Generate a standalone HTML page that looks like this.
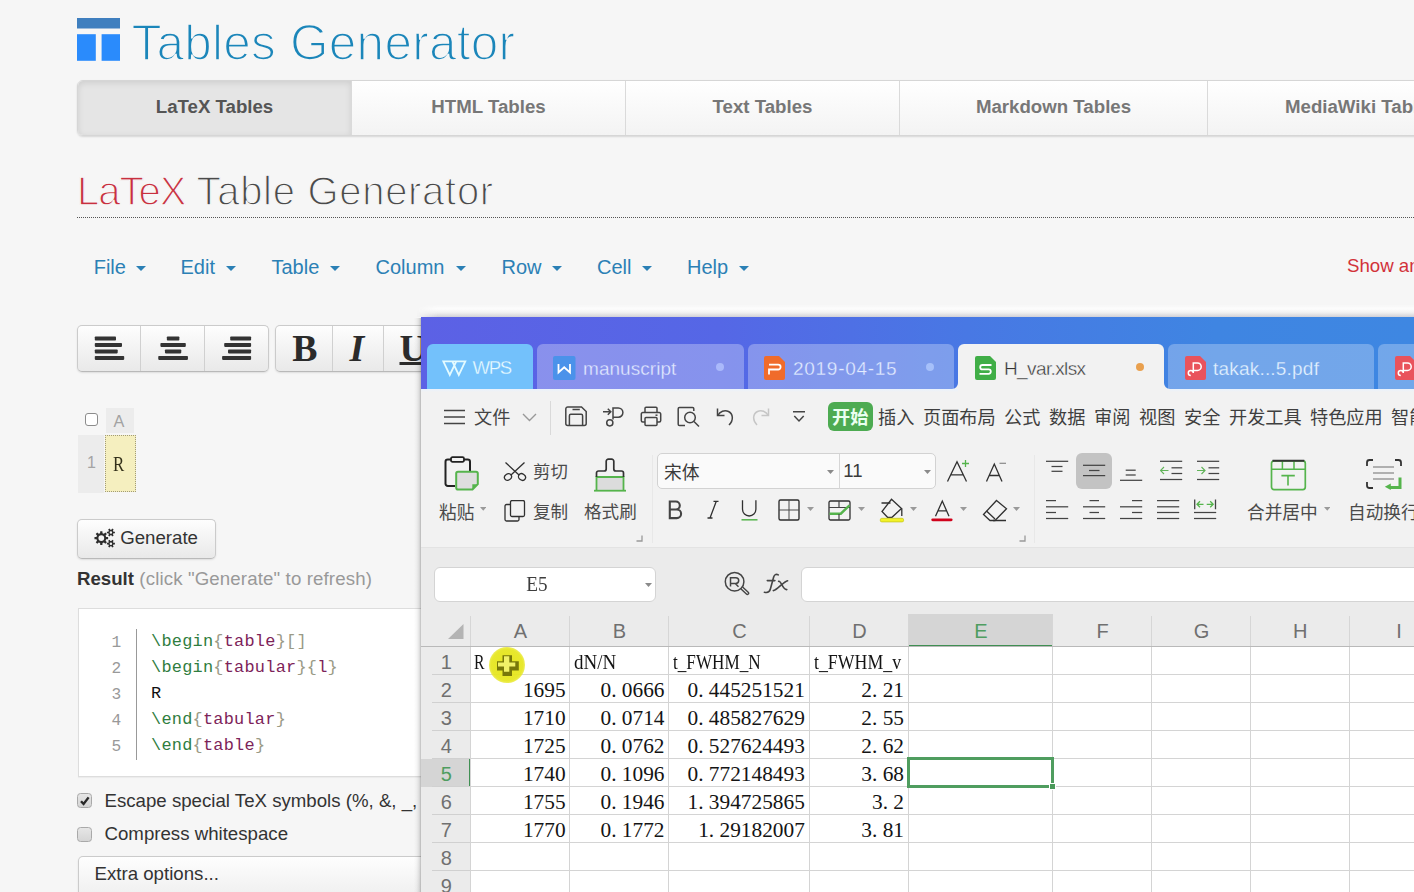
<!DOCTYPE html>
<html lang="en"><head><meta charset="utf-8"><title>LaTeX Tables Generator</title>
<style>
html,body{margin:0;padding:0}
body{width:1414px;height:892px;overflow:hidden;position:relative;background:#f6f6f6;font-family:"Liberation Sans",sans-serif;color:#333}
.a,.t,.cj,.btn,.cb,.caret,.nav,#page>div,#wpsin>div{position:absolute}
.t{white-space:nowrap;line-height:1;margin:0;font-weight:normal}
h1.t{font-weight:normal;-webkit-text-stroke:1.3px #f6f6f6}
.title{-webkit-text-stroke:1.7px #f6f6f6}
.cj{overflow:visible}
.cj text{font-family:"Liberation Sans","Noto Sans CJK SC",sans-serif;font-size:1000px}
#page{position:absolute;left:0;top:0;width:1414px;height:892px;overflow:hidden}
.nav{left:77px;top:80px;width:1400px;height:56px;box-sizing:border-box;border:1px solid #d6d6d6;border-radius:6px 0 0 6px;background:linear-gradient(#fff,#f3f3f3);box-shadow:0 1px 2px rgba(0,0,0,.13)}
.tab{position:absolute;top:0;height:54px;line-height:52.5px;text-align:center;font-weight:bold;font-size:18.67px;color:#777;border-right:1px solid #dadada;box-sizing:border-box;white-space:nowrap}
.tab.on{color:#555;background:#e5e5e5;box-shadow:inset 0 2px 6px rgba(0,0,0,.1);border-radius:5px 0 0 5px}
.caret{width:0;height:0;border-left:5.3px solid transparent;border-right:5.3px solid transparent;border-top:5.4px solid #2b80b5}
.btn{box-sizing:border-box;border:1px solid #cbcbcb;border-bottom-color:#b9b9b9;border-radius:5px;background:linear-gradient(#fefefe,#f4f4f4 45%,#e9e9e9);box-shadow:0 1px 2px rgba(0,0,0,.1)}
.grp i{position:absolute;top:0;bottom:0;width:0;border-left:1px solid #d0d0d0}
.cb{box-sizing:border-box;border:1px solid #a9a9a9;border-radius:3.5px;background:linear-gradient(#e6e6e6,#d5d5d5)}
.cb svg{position:absolute;left:0;top:-0.5px}
.code .g{color:#2f7d40}.code .k{color:#9a9a86}.code .p{color:#7d2359}
#wps{position:absolute;left:421px;top:317px;width:993px;height:575px;overflow:hidden}
#shl{position:absolute;left:413.5px;top:318px;width:7.5px;height:574px;background:linear-gradient(90deg,rgba(0,0,0,0) 0,rgba(0,0,0,.035) 40%,rgba(0,0,0,.11) 75%,rgba(0,0,0,.26) 100%)}
#sht{position:absolute;left:416px;top:304px;width:998px;height:13px;background:linear-gradient(180deg,rgba(255,255,255,0) 0,rgba(255,255,255,.75) 38%,rgba(238,238,238,.85) 68%,rgba(205,205,212,.95) 100%);-webkit-mask-image:linear-gradient(90deg,transparent 0,#000 22px);mask-image:linear-gradient(90deg,transparent 0,#000 22px)}
#wpsin{position:absolute;left:-421px;top:-317px;width:1414px;height:892px}
.hd,.nm{font-family:"Liberation Serif",serif;font-size:21.33px;color:#141414}
.hd{transform-origin:0 50%}
.dot{display:inline-block;width:.5em}
.fx i{font-family:"Liberation Serif",serif;font-size:27px}
</style></head>
<body>
<div id="page">
<svg class="a" style="left:77px;top:18px" width="43" height="43" viewBox="0 0 43 43"><title>Tables Generator logo</title><rect x="0" y="0" width="43" height="10.5" fill="#3f7fbf"/><rect x="0" y="16.2" width="18.8" height="26.6" fill="#2a8bfc"/><rect x="24.6" y="16.2" width="18.4" height="26.6" fill="#2a8bfc"/></svg>
<div class="t title" style="top:18.1px;font-size:49.5px;color:#1b86ba;left:131.5px;letter-spacing:0.25px;">Tables Generator</div>
<div class="nav"><div class="tab on" style="left:0;width:274px">LaTeX Tables</div><div class="tab" style="left:274px;width:274px">HTML Tables</div><div class="tab" style="left:548px;width:274px">Text Tables</div><div class="tab" style="left:822px;width:308px">Markdown Tables</div><div class="tab" style="left:1130px;width:300px;text-align:left;padding-left:77px">MediaWiki Tables</div></div>
<h1 class="t h1" style="top:170.64px;font-size:40px;color:#4a4a4a;left:77px;letter-spacing:0.7px;"><span style="color:#c8303f;letter-spacing:-1px">LaTeX</span> Table Generator</h1>
<div class="a" style="left:77px;top:216.5px;width:1337px;border-top:1px dotted #555"></div>
<div class="t m" style="top:256.87px;font-size:20px;color:#2b80b5;left:93.7px;">File</div>
<div class="caret" style="left:136px;top:265.5px"></div>
<div class="t m" style="top:256.87px;font-size:20px;color:#2b80b5;left:180.5px;">Edit</div>
<div class="caret" style="left:226px;top:265.5px"></div>
<div class="t m" style="top:256.87px;font-size:20px;color:#2b80b5;left:271.5px;">Table</div>
<div class="caret" style="left:330px;top:265.5px"></div>
<div class="t m" style="top:256.87px;font-size:20px;color:#2b80b5;left:375.5px;">Column</div>
<div class="caret" style="left:456px;top:265.5px"></div>
<div class="t m" style="top:256.87px;font-size:20px;color:#2b80b5;left:501.5px;">Row</div>
<div class="caret" style="left:552px;top:265.5px"></div>
<div class="t m" style="top:256.87px;font-size:20px;color:#2b80b5;left:597px;">Cell</div>
<div class="caret" style="left:641.5px;top:265.5px"></div>
<div class="t m" style="top:256.87px;font-size:20px;color:#2b80b5;left:687px;">Help</div>
<div class="caret" style="left:739px;top:265.5px"></div>
<div class="t" style="top:257.4px;font-size:18.67px;color:#d2323a;left:1347px;">Show&nbsp;an&nbsp;example</div>
<div class="btn grp" style="left:77px;top:325px;width:192px;height:46.5px"><i style="left:62px"></i><i style="left:126px"></i></div>
<div class="btn grp" style="left:275px;top:325px;width:200px;height:46.5px"><i style="left:56px"></i><i style="left:107px"></i></div>
<svg class="a" style="left:0;top:0" width="300" height="400" viewBox="0 0 300 400" fill="#333"><title>align left, center, right</title><rect x="94.8" y="336.5" width="21.2" height="4" rx="0.8"/><rect x="94.8" y="342.9" width="27.2" height="4" rx="0.8"/><rect x="94.8" y="349.4" width="22.9" height="4" rx="0.8"/><rect x="94.8" y="355.9" width="29.4" height="4" rx="0.8"/><rect x="166.85" y="336.5" width="12.5" height="4" rx="0.8"/><rect x="160.4" y="342.9" width="25.4" height="4" rx="0.8"/><rect x="164.95" y="349.4" width="16.3" height="4" rx="0.8"/><rect x="158.25" y="355.9" width="29.7" height="4" rx="0.8"/><rect x="230.2" y="336.5" width="20.9" height="4" rx="0.8"/><rect x="224.2" y="342.9" width="26.9" height="4" rx="0.8"/><rect x="228" y="349.4" width="23.1" height="4" rx="0.8"/><rect x="222.1" y="355.9" width="29" height="4" rx="0.8"/></svg>
<div class="t" style="top:329.94px;font-size:37.8px;color:#2b2b2b;left:292.2px;font-family:'Liberation Serif',serif;font-weight:bold;">B</div>
<div class="t" style="top:329.94px;font-size:37.8px;color:#2b2b2b;left:349.5px;font-family:'Liberation Serif',serif;font-weight:bold;font-style:italic;">I</div>
<div class="t" style="top:329.94px;font-size:37.8px;color:#2b2b2b;left:399.5px;font-family:'Liberation Serif',serif;font-weight:bold;text-decoration:underline;text-decoration-thickness:3px;text-underline-offset:1px;">U</div>
<div class="a" style="left:106.3px;top:407.7px;width:28px;height:25.5px;background:#ececec"></div>
<div class="a" style="left:85px;top:413px;width:13px;height:13px;border:1.5px solid #8c8c8c;border-radius:3px;background:#fff;box-sizing:border-box"></div>
<div class="t" style="top:413.2px;font-size:16.3px;color:#a2a2a2;left:-181px;width:600px;text-align:center;">A</div>
<div class="a" style="left:78.3px;top:435px;width:25.7px;height:58px;background:#ececec"></div>
<div class="t" style="top:455.46px;font-size:16px;color:#a4a4a4;left:-208.5px;width:600px;text-align:center;">1</div>
<div class="a" style="left:104.6px;top:434.6px;width:31.6px;height:57.6px;background:#f5efbf;border:1px dotted #a19b78;box-sizing:border-box"></div>
<div class="t" style="top:453.91px;font-size:21.6px;color:#33301a;left:112.5px;font-family:'Liberation Serif',serif;transform:scaleX(.78);transform-origin:0 0;">R</div>
<div class="btn" style="left:77px;top:519px;width:138.5px;height:39.5px;"></div>
<svg class="a" style="left:0;top:0" width="130" height="560" viewBox="0 0 130 560"><title>gears</title><path fill="#2d2d2d" fill-rule="evenodd" d="M106.15 536.89L108.12 537.02L108.12 539.18L106.15 539.31L105.59 540.67L106.88 542.16L105.36 543.68L103.87 542.39L102.51 542.95L102.38 544.92L100.22 544.92L100.09 542.95L98.73 542.39L97.24 543.68L95.72 542.16L97.01 540.67L96.45 539.31L94.48 539.18L94.48 537.02L96.45 536.89L97.01 535.53L95.72 534.04L97.24 532.52L98.73 533.81L100.09 533.25L100.22 531.28L102.38 531.28L102.51 533.25L103.87 533.81L105.36 532.52L106.88 534.04L105.59 535.53zM104.2 538.1a2.9 2.9 0 1 0 -5.8 0a2.9 2.9 0 1 0 5.8 0zM113.46 531.63L114.91 531.65L114.91 533.35L113.46 533.37L112.93 534.28L113.64 535.55L112.17 536.4L111.43 535.15L110.37 535.15L109.63 536.4L108.16 535.55L108.87 534.28L108.34 533.37L106.89 533.35L106.89 531.65L108.34 531.63L108.87 530.72L108.16 529.45L109.63 528.6L110.37 529.85L111.43 529.85L112.17 528.6L113.64 529.45L112.93 530.72zM112.15 532.5a1.25 1.25 0 1 0 -2.5 0a1.25 1.25 0 1 0 2.5 0zM113.46 542.83L114.91 542.85L114.91 544.55L113.46 544.57L112.93 545.48L113.64 546.75L112.17 547.6L111.43 546.35L110.37 546.35L109.63 547.6L108.16 546.75L108.87 545.48L108.34 544.57L106.89 544.55L106.89 542.85L108.34 542.83L108.87 541.92L108.16 540.65L109.63 539.8L110.37 541.05L111.43 541.05L112.17 539.8L113.64 540.65L112.93 541.92zM112.15 543.7a1.25 1.25 0 1 0 -2.5 0a1.25 1.25 0 1 0 2.5 0z"/></svg>
<div class="t" style="top:528.9px;font-size:18.67px;color:#333;left:120.2px;">Generate</div>
<div class="t" style="top:569.7px;font-size:18.67px;color:#999;left:77px;letter-spacing:0.13px;"><b style="color:#333;letter-spacing:0">Result</b> (click "Generate" to refresh)</div>
<div class="a" style="left:77.5px;top:608px;width:1200px;height:168.5px;background:#fff;border:1px solid #ddd;box-sizing:border-box;box-shadow:0 1px 1px rgba(0,0,0,.04)"></div>
<div class="a" style="left:135.5px;top:629.3px;width:0px;height:130.6px;border-left:1px solid #999"></div>
<div class="t" style="top:635.08px;font-size:16.2px;color:#999;left:111.5px;font-family:'Liberation Mono',monospace;">1</div>
<div class="t code" style="top:634.04px;font-size:16.91px;color:#111;left:151px;font-family:'Liberation Mono',monospace;letter-spacing:0.24px;"><span class="g">\begin</span><span class="k">{</span><span class="p">table</span><span class="k">}[]</span></div>
<div class="t" style="top:661.08px;font-size:16.2px;color:#999;left:111.5px;font-family:'Liberation Mono',monospace;">2</div>
<div class="t code" style="top:660.04px;font-size:16.91px;color:#111;left:151px;font-family:'Liberation Mono',monospace;letter-spacing:0.24px;"><span class="g">\begin</span><span class="k">{</span><span class="p">tabular</span><span class="k">}{</span><span class="p">l</span><span class="k">}</span></div>
<div class="t" style="top:687.08px;font-size:16.2px;color:#999;left:111.5px;font-family:'Liberation Mono',monospace;">3</div>
<div class="t code" style="top:686.04px;font-size:16.91px;color:#111;left:151px;font-family:'Liberation Mono',monospace;letter-spacing:0.24px;">R</div>
<div class="t" style="top:713.08px;font-size:16.2px;color:#999;left:111.5px;font-family:'Liberation Mono',monospace;">4</div>
<div class="t code" style="top:712.04px;font-size:16.91px;color:#111;left:151px;font-family:'Liberation Mono',monospace;letter-spacing:0.24px;"><span class="g">\end</span><span class="k">{</span><span class="p">tabular</span><span class="k">}</span></div>
<div class="t" style="top:739.08px;font-size:16.2px;color:#999;left:111.5px;font-family:'Liberation Mono',monospace;">5</div>
<div class="t code" style="top:738.04px;font-size:16.91px;color:#111;left:151px;font-family:'Liberation Mono',monospace;letter-spacing:0.24px;"><span class="g">\end</span><span class="k">{</span><span class="p">table</span><span class="k">}</span></div>
<div class="cb" style="left:77px;top:793px;width:15px;height:15px;"><svg width="14" height="14" viewBox="0 0 14 14"><path d="M3 7.2l2.6 2.8 5-6.6" fill="none" stroke="#2a2a2a" stroke-width="2.4"/></svg></div>
<div class="t" style="top:791.9px;font-size:18.67px;color:#333;left:104.5px;">Escape special TeX symbols (%, &amp;, _, #, $)</div>
<div class="cb" style="left:77px;top:827px;width:15px;height:15px;"></div>
<div class="t" style="top:824.5px;font-size:18.67px;color:#333;left:104.5px;">Compress whitespace</div>
<div class="btn" style="left:77.5px;top:856px;width:1200px;height:60px;"></div>
<div class="t" style="top:864.9px;font-size:18.67px;color:#333;left:94.5px;">Extra options...</div>
</div>
<div id="shl"></div><div id="sht"></div>
<div id="wps"><div id="wpsin">
<div class="a" style="left:421px;top:317px;width:993px;height:72px;background:linear-gradient(90deg,#5c61e5 0%,#5567e6 30%,#4878e4 55%,#3f85e2 80%,#3e87e2 100%)"></div>
<div class="a" style="left:427px;top:344.3px;width:106px;height:45px;background:#73c1fb;border-radius:6px 6px 0 0"></div>
<svg class="a" style="left:441.5px;top:359.5px;" width="25" height="17" viewBox="0 0 25 17"><title>WPS logo</title><path d="M1.3 1.3H14.3L7.8 15zM10.3 1.3H23.3L16.8 15z" fill="none" stroke="#e4fbff" stroke-width="1.8" stroke-linejoin="miter"/></svg>
<div class="t" style="top:359.06px;font-size:18.6px;color:#e9fcff;left:472.5px;letter-spacing:-1.4px;-webkit-text-stroke:.3px #73c1fb;">WPS</div>
<div class="a" style="left:537px;top:344.3px;width:207px;height:45px;background:rgba(255,255,255,.29);border-radius:6px 6px 0 0"></div>
<svg class="a" style="left:553px;top:356px;" width="22.5" height="24" viewBox="0 0 22.5 24"><rect width="22.5" height="24" rx="2" fill="#4b92ea"/><path d="M5.5 8v8.5l5.7-5.2 5.8 5.2V8" fill="none" stroke="#fff" stroke-width="1.8"/></svg>
<div class="t" style="top:358.72px;font-size:19px;color:#e3eaff;left:583px;letter-spacing:0.05px;-webkit-text-stroke:.3px #8892ee;">manuscript</div>
<div class="a" style="left:715.8px;top:362.6px;width:8px;height:8px;background:#aab9fb;border-radius:50%"></div>
<div class="a" style="left:748px;top:344.3px;width:206px;height:45px;background:rgba(255,255,255,.29);border-radius:6px 6px 0 0"></div>
<svg class="a" style="left:764px;top:356px;" width="21" height="24" viewBox="0 0 21 24"><path d="M2 0h13l6 6v16a2 2 0 0 1-2 2H2a2 2 0 0 1-2-2V2a2 2 0 0 1 2-2z" fill="#f06b2b"/><path d="M5 18.5v-5h9.2a2.4 2.4 0 0 0 0-4.8H5" fill="none" stroke="#fff" stroke-width="1.8"/></svg>
<div class="t" style="top:358.72px;font-size:19px;color:#e3ecff;left:793px;letter-spacing:0.72px;-webkit-text-stroke:.3px #829aee;">2019-04-15</div>
<div class="a" style="left:925.7px;top:362.6px;width:8px;height:8px;background:#a6c0fa;border-radius:50%"></div>
<div class="a" style="left:958px;top:344.3px;width:206px;height:46px;background:#f2f2f2;border-radius:6px 6px 0 0"></div>
<svg class="a" style="left:952px;top:383px;" width="6" height="6" viewBox="0 0 6 6"><path d="M6 0v6H0A6 6 0 0 0 6 0z" fill="#f2f2f2"/></svg>
<svg class="a" style="left:1164px;top:383px;" width="6" height="6" viewBox="0 0 6 6"><path d="M0 0v6h6A6 6 0 0 1 0 0z" fill="#f2f2f2"/></svg>
<svg class="a" style="left:974.5px;top:356px;" width="21" height="24" viewBox="0 0 21 24"><path d="M2 0h13l6 6v16a2 2 0 0 1-2 2H2a2 2 0 0 1-2-2V2a2 2 0 0 1 2-2z" fill="#40ae47"/><path d="M16.5 9H7.4a2.2 2.2 0 0 0 0 4.4h6.2a2.2 2.2 0 0 1 0 4.4H4.5" fill="none" stroke="#fff" stroke-width="1.8"/></svg>
<div class="t" style="top:358.72px;font-size:19px;color:#333;left:1004px;letter-spacing:-0.62px;-webkit-text-stroke:.4px #f2f2f2;">H_var.xlsx</div>
<div class="a" style="left:1135.7px;top:362.6px;width:8px;height:8px;background:#e9a04e;border-radius:50%"></div>
<div class="a" style="left:1168px;top:344.3px;width:205.5px;height:45px;background:rgba(255,255,255,.27);border-radius:6px 6px 0 0"></div>
<svg class="a" style="left:1184.5px;top:356px;" width="21" height="24" viewBox="0 0 21 24"><path d="M2 0h13l6 6v16a2 2 0 0 1-2 2H2a2 2 0 0 1-2-2V2a2 2 0 0 1 2-2z" fill="#e9535c"/><path d="M5.8 19.6a2.5 2.5 0 1 1 2.5-2.5V7h4.2a3.7 3.7 0 0 1 0 7.4H8.3" fill="none" stroke="#fff" stroke-width="1.5"/></svg>
<div class="t" style="top:358.72px;font-size:19px;color:#e4f3ff;left:1213px;letter-spacing:0.2px;-webkit-text-stroke:.25px #73a6ec;">takak...5.pdf</div>
<div class="a" style="left:1378px;top:344.3px;width:205px;height:45px;background:rgba(255,255,255,.27);border-radius:6px 6px 0 0"></div>
<svg class="a" style="left:1394.5px;top:356px;" width="21" height="24" viewBox="0 0 21 24"><path d="M2 0h13l6 6v16a2 2 0 0 1-2 2H2a2 2 0 0 1-2-2V2a2 2 0 0 1 2-2z" fill="#e9535c"/><path d="M5.8 19.6a2.5 2.5 0 1 1 2.5-2.5V7h4.2a3.7 3.7 0 0 1 0 7.4H8.3" fill="none" stroke="#fff" stroke-width="1.5"/></svg>
<div class="a" style="left:421px;top:389px;width:993px;height:160px;background:#f2f2f2"></div>
<div class="a" style="left:421px;top:388.8px;width:537px;height:3px;background:linear-gradient(#e9f2fd,#f2f2f2)"></div>
<div class="a" style="left:1170px;top:388.8px;width:244px;height:3px;background:linear-gradient(#e9f2fd,#f2f2f2)"></div>
<svg class="a" style="left:444px;top:405px;" width="22" height="22" viewBox="0 0 22 22"><path d="M0 5.5h21M0 12h21M0 18.5h21" fill="none" stroke="#444" stroke-width="1.5"/></svg>
<svg class="cj" role="img" aria-label="文件" style="left:474px;top:407.5px;" width="36.4" height="18.2" viewBox="0 -880 2000 1000"><title>文件</title><text x="0" y="0" fill="#444">文件</text></svg>
<svg class="a" style="left:522px;top:413px;" width="15" height="9" viewBox="0 0 15 9"><path d="M1 1l6.5 6.5L14 1" fill="none" stroke="#999" stroke-width="1.4"/></svg>
<div class="a" style="left:550px;top:401px;width:0px;height:34px;border-left:1px solid #d9d9d9"></div>
<svg class="a" style="left:565px;top:406px;" width="22" height="21" viewBox="0 0 22 21"><title>save</title><path d="M0.8 3a2 2 0 0 1 2-2h13.7l4.7 4.5V17.6a2 2 0 0 1-2 2H2.8a2 2 0 0 1-2-2z" fill="none" stroke="#444" stroke-width="1.5"/><path d="M4.4 19.5V9.7a1.4 1.4 0 0 1 1.4-1.4h10.4a1.4 1.4 0 0 1 1.4 1.4v9.8M7.5 3.5h7.3" fill="none" stroke="#444" stroke-width="1.5"/></svg>
<svg class="a" style="left:602px;top:406px;" width="23" height="22" viewBox="0 0 23 22"><title>export</title><path d="M1 5.7h7.8M5.8 2.7l3 3-3 3" fill="none" stroke="#444" stroke-width="1.5"/><path d="M11 13.5V2h5.3a4.6 4.6 0 0 1 0 9.2H11" fill="none" stroke="#444" stroke-width="1.5"/><circle cx="7.8" cy="16.8" r="3.1" fill="none" stroke="#444" stroke-width="1.5"/></svg>
<svg class="a" style="left:639.5px;top:406px;" width="22" height="21" viewBox="0 0 22 21"><title>print</title><path d="M5 6.5V2.3a1 1 0 0 1 1-1h10a1 1 0 0 1 1 1v4.2" fill="none" stroke="#444" stroke-width="1.5"/><path d="M5 16H2.8a1.5 1.5 0 0 1-1.5-1.5V8a1.5 1.5 0 0 1 1.5-1.5h16.4A1.5 1.5 0 0 1 20.7 8v6.5a1.5 1.5 0 0 1-1.5 1.5H17" fill="none" stroke="#444" stroke-width="1.5"/><rect x="5" y="11.5" width="12" height="8" rx="1" fill="none" stroke="#444" stroke-width="1.5"/><path d="M15.5 9.2h2" fill="none" stroke="#444" stroke-width="1.5"/></svg>
<svg class="a" style="left:676.5px;top:406px;" width="23" height="22" viewBox="0 0 23 22"><title>preview</title><path d="M8 19.5H2.5a1.3 1.3 0 0 1-1.3-1.3V2.8a1.3 1.3 0 0 1 1.3-1.3h13a1.3 1.3 0 0 1 1.3 1.3V5" fill="none" stroke="#444" stroke-width="1.5"/><circle cx="13" cy="11.5" r="5.3" fill="none" stroke="#444" stroke-width="1.5"/><path d="M17 15.5l5 5" fill="none" stroke="#444" stroke-width="1.5"/></svg>
<svg class="a" style="left:714.5px;top:407px;" width="20" height="19" viewBox="0 0 20 19"><title>undo</title><path d="M2.5 1.5v7h7" fill="none" stroke="#444" stroke-width="1.5"/><path d="M2.8 8.3C5 4.5 9.5 2.6 13.5 4.5c4.5 2.2 5.5 8.5 0.5 13.5" fill="none" stroke="#444" stroke-width="1.5"/></svg>
<svg class="a" style="left:750.5px;top:407px;" width="20" height="19" viewBox="0 0 20 19"><title>redo</title><g fill="none" stroke="#c6c6c6" stroke-width="1.5"><path d="M17.5 1.5v7h-7"/><path d="M17.2 8.3C15 4.5 10.5 2.6 6.5 4.5c-4.5 2.2-5.5 8.5-0.5 13.5"/></g></svg>
<svg class="a" style="left:792px;top:410px;" width="14" height="13" viewBox="0 0 14 13"><path d="M1 1.8h12M2.3 6l4.7 5 4.7-5" fill="none" stroke="#444" stroke-width="1.5"/></svg>
<div class="a" style="left:828px;top:402.3px;width:45px;height:29.2px;background:#4dab52;border-radius:6px"></div>
<svg class="cj" role="img" aria-label="开始" style="left:832.3px;top:408.3px;" width="36.4" height="18.2" viewBox="0 -880 2000 1000"><title>开始</title><text x="0" y="0" fill="#eafff0" font-weight="bold">开始</text></svg>
<svg class="cj" role="img" aria-label="插入" style="left:877.6px;top:408px;" width="36.4" height="18.2" viewBox="0 -880 2000 1000"><title>插入</title><text x="0" y="0" fill="#3f3f3f">插入</text></svg>
<svg class="cj" role="img" aria-label="页面布局" style="left:922.6px;top:408px;" width="72.8" height="18.2" viewBox="0 -880 4000 1000"><title>页面布局</title><text x="0" y="0" fill="#3f3f3f">页面布局</text></svg>
<svg class="cj" role="img" aria-label="公式" style="left:1003.6px;top:408px;" width="36.4" height="18.2" viewBox="0 -880 2000 1000"><title>公式</title><text x="0" y="0" fill="#3f3f3f">公式</text></svg>
<svg class="cj" role="img" aria-label="数据" style="left:1048.6px;top:408px;" width="36.4" height="18.2" viewBox="0 -880 2000 1000"><title>数据</title><text x="0" y="0" fill="#3f3f3f">数据</text></svg>
<svg class="cj" role="img" aria-label="审阅" style="left:1093.6px;top:408px;" width="36.4" height="18.2" viewBox="0 -880 2000 1000"><title>审阅</title><text x="0" y="0" fill="#3f3f3f">审阅</text></svg>
<svg class="cj" role="img" aria-label="视图" style="left:1138.6px;top:408px;" width="36.4" height="18.2" viewBox="0 -880 2000 1000"><title>视图</title><text x="0" y="0" fill="#3f3f3f">视图</text></svg>
<svg class="cj" role="img" aria-label="安全" style="left:1183.6px;top:408px;" width="36.4" height="18.2" viewBox="0 -880 2000 1000"><title>安全</title><text x="0" y="0" fill="#3f3f3f">安全</text></svg>
<svg class="cj" role="img" aria-label="开发工具" style="left:1228.6px;top:408px;" width="72.8" height="18.2" viewBox="0 -880 4000 1000"><title>开发工具</title><text x="0" y="0" fill="#3f3f3f">开发工具</text></svg>
<svg class="cj" role="img" aria-label="特色应用" style="left:1309.6px;top:408px;" width="72.8" height="18.2" viewBox="0 -880 4000 1000"><title>特色应用</title><text x="0" y="0" fill="#3f3f3f">特色应用</text></svg>
<svg class="cj" role="img" aria-label="智能" style="left:1390.6px;top:408px;" width="36.4" height="18.2" viewBox="0 -880 2000 1000"><title>智能</title><text x="0" y="0" fill="#3f3f3f">智能</text></svg>
<svg class="a" style="left:444px;top:456px;" width="36" height="36" viewBox="0 0 36 36"><title>paste</title><path d="M7 3.5H3.8A2.3 2.3 0 0 0 1.5 5.8V27.7A2.3 2.3 0 0 0 3.8 30H11M20 3.5h3.7A2.3 2.3 0 0 1 26 5.8V15" fill="none" stroke="#222" stroke-width="2"/><rect x="7" y="1.2" width="13" height="4.6" rx="1.5" fill="none" stroke="#222" stroke-width="1.8"/><path d="M14 15.7h18a1.8 1.8 0 0 1 1.8 1.8v10.7l-5.3 5.3H14a1.8 1.8 0 0 1-1.8-1.8V17.5a1.8 1.8 0 0 1 1.8-1.8z" fill="#dedede" stroke="#55b44c" stroke-width="2"/><path d="M33.3 28.3l-5 5v-5z" fill="#55b44c"/></svg>
<svg class="cj" role="img" aria-label="粘贴" style="left:438.6px;top:503px;" width="35.4" height="17.7" viewBox="0 -880 2000 1000"><title>粘贴</title><text x="0" y="0" fill="#4a4a4a">粘贴</text></svg>
<svg class="a" style="left:479.5px;top:506.8px;" width="6.5" height="3.8" viewBox="0 0 6.5 3.8"><path d="M0 0h6.5L3.25 3.8z" fill="#9a9a9a"/></svg>
<svg class="a" style="left:503px;top:461px;" width="24" height="21" viewBox="0 0 24 21"><title>cut</title><path d="M2.5 1.5L16.3 14.3M21.5 1.5L7.7 14.3" fill="none" stroke="#303030" stroke-width="1.3"/><ellipse cx="5" cy="16" rx="3.7" ry="3.1" transform="rotate(-35 5 16)" fill="none" stroke="#303030" stroke-width="1.3"/><ellipse cx="19" cy="16" rx="3.7" ry="3.1" transform="rotate(35 19 16)" fill="none" stroke="#303030" stroke-width="1.3"/></svg>
<svg class="cj" role="img" aria-label="剪切" style="left:533px;top:463.4px;" width="34.8" height="17.4" viewBox="0 -880 2000 1000"><title>剪切</title><text x="0" y="0" fill="#4a4a4a">剪切</text></svg>
<svg class="a" style="left:504px;top:500px;" width="22" height="23" viewBox="0 0 22 23"><title>copy</title><rect x="6.5" y="0.5" width="14" height="16" rx="1.5" fill="none" stroke="#303030" stroke-width="1.3"/><path d="M6.5 4.5H2.5A1.5 1.5 0 0 0 1 6V19.5A1.5 1.5 0 0 0 2.5 21H13.5a1.5 1.5 0 0 0 1.5-1.5V16.5" fill="none" stroke="#303030" stroke-width="1.3"/></svg>
<svg class="cj" role="img" aria-label="复制" style="left:532.6px;top:503px;" width="35.2" height="17.6" viewBox="0 -880 2000 1000"><title>复制</title><text x="0" y="0" fill="#4a4a4a">复制</text></svg>
<svg class="a" style="left:593px;top:458px;" width="34" height="34" viewBox="0 0 34 34"><title>format painter</title><path d="M3.5 32.5V19h27v13.5" fill="#dcdcdc" stroke="#55b44c" stroke-width="1.8"/><path d="M1 32.7h32" stroke="#55b44c" stroke-width="1.8"/><path d="M3.5 19v-4a2 2 0 0 1 2-2h5.7a2 2 0 0 0 2-2V3.3a2.2 2.2 0 0 1 2.2-2.2h3.2a2.2 2.2 0 0 1 2.2 2.2V11a2 2 0 0 0 2 2h5.7a2 2 0 0 1 2 2v4" fill="none" stroke="#333" stroke-width="1.7"/></svg>
<svg class="cj" role="img" aria-label="格式刷" style="left:583.5px;top:503px;" width="52.8" height="17.6" viewBox="0 -880 3000 1000"><title>格式刷</title><text x="0" y="0" fill="#4a4a4a">格式刷</text></svg>
<svg class="a" style="left:636px;top:535px;" width="7" height="7" viewBox="0 0 7 7"><path d="M6 0.5V6H0.5" fill="none" stroke="#999" stroke-width="1.3"/></svg>
<div class="a" style="left:651.5px;top:455px;width:0px;height:88px;border-left:1px solid #e8e8e8"></div>
<div class="a" style="left:657px;top:452.8px;width:278.5px;height:36.2px;background:#fafafa;border:1px solid #d2d2d2;border-radius:5px;box-sizing:border-box"></div>
<div class="a" style="left:838.5px;top:453.5px;width:0px;height:35px;border-left:1px solid #d6d6d6"></div>
<svg class="cj" role="img" aria-label="宋体" style="left:663.6px;top:462.8px;" width="35.6" height="17.8" viewBox="0 -880 2000 1000"><title>宋体</title><text x="0" y="0" fill="#3a3a3a">宋体</text></svg>
<svg class="a" style="left:827px;top:470.3px;" width="7" height="4" viewBox="0 0 7 4"><path d="M0 0h7L3.5 4z" fill="#8a8a8a"/></svg>
<div class="t" style="top:461.86px;font-size:18.6px;color:#3a3a3a;left:843.3px;">11</div>
<svg class="a" style="left:924px;top:470.3px;" width="7" height="4" viewBox="0 0 7 4"><path d="M0 0h7L3.5 4z" fill="#8a8a8a"/></svg>
<svg class="a" style="left:946px;top:459px;" width="24" height="24" viewBox="0 0 24 24"><title>increase font</title><path d="M1.5 22.5L11 2.7 20.5 22.5M4.8 15.8h12.4" fill="none" stroke="#303030" stroke-width="1.3"/><path d="M19.5 1v7M16 4.5h7" stroke="#55b44c" stroke-width="1.3" fill="none"/></svg>
<svg class="a" style="left:985px;top:461px;" width="22" height="22" viewBox="0 0 22 22"><title>decrease font</title><path d="M1.5 20.5L9.3 3 17 20.5M4.3 14.5h10" fill="none" stroke="#303030" stroke-width="1.3"/><path d="M14.5 2.3h6.5" stroke="#888" stroke-width="1.2" fill="none"/></svg>
<svg class="a" style="left:667px;top:499px;" width="17" height="21" viewBox="0 0 17 21"><title>bold</title><path d="M2.8 2.5h6a4 4 0 0 1 0 8h-6zM2.8 10.5h7a4.3 4.3 0 0 1 0 8.6h-7z" fill="none" stroke="#444" stroke-width="2.1"/></svg>
<svg class="a" style="left:706px;top:499px;" width="14" height="21" viewBox="0 0 14 21"><title>italic</title><path d="M10.3 2.3L4 19M7.5 2.3h5M1.5 19h5" fill="none" stroke="#303030" stroke-width="1.3"/></svg>
<svg class="a" style="left:740px;top:499px;" width="19" height="23" viewBox="0 0 19 23"><title>underline</title><path d="M2.5 1.3v9a6.7 6.7 0 0 0 13.4 0v-9" fill="none" stroke="#303030" stroke-width="1.3"/><path d="M1.5 20.8h16" stroke="#55b44c" stroke-width="1.5" fill="none"/></svg>
<svg class="a" style="left:777.5px;top:498.8px;" width="22" height="22" viewBox="0 0 22 22"><title>borders</title><rect x="1" y="1" width="20" height="20" rx="1.5" fill="none" stroke="#2c2c2c" stroke-width="1.35"/><path d="M11 1v20M1 11h20" stroke="#4a4a4a" stroke-width="1" fill="none"/></svg>
<svg class="a" style="left:807px;top:507.4px;" width="7" height="4" viewBox="0 0 7 4"><path d="M0 0h7L3.5 4z" fill="#9a9a9a"/></svg>
<svg class="a" style="left:827.5px;top:500px;" width="24" height="21" viewBox="0 0 24 21"><title>table style</title><rect x="1" y="1" width="21" height="19" rx="1.5" fill="none" stroke="#303030" stroke-width="1.3"/><path d="M1 7.5h21M11 1v6.5" stroke="#444" stroke-width="1.2" fill="none"/><path d="M1.5 13.7h11.3l8.7-8.4" stroke="#55b44c" stroke-width="2.4" fill="none"/><path d="M11 14v6" stroke="#444" stroke-width="1.2" fill="none"/></svg>
<svg class="a" style="left:857.5px;top:507.4px;" width="7" height="4" viewBox="0 0 7 4"><path d="M0 0h7L3.5 4z" fill="#9a9a9a"/></svg>
<svg class="a" style="left:879px;top:496.5px;" width="26" height="26" viewBox="0 0 26 26"><title>fill</title><path d="M12.5 2.3L22.5 11.5 13 20.3H8.5L3 14.5z" fill="none" stroke="#303030" stroke-width="1.3"/><path d="M2.5 6h9M22.8 11.5V19" fill="none" stroke="#303030" stroke-width="1.3"/><rect x="1.3" y="21.3" width="23.3" height="3.6" rx="1.5" fill="#f2f228" stroke="#c8c820" stroke-width="0.8"/></svg>
<svg class="a" style="left:910.3px;top:507.4px;" width="7" height="4" viewBox="0 0 7 4"><path d="M0 0h7L3.5 4z" fill="#9a9a9a"/></svg>
<svg class="a" style="left:930px;top:498.5px;" width="24" height="24" viewBox="0 0 24 24"><title>font color</title><path d="M5.5 17.3L12.3 2 19 17.3M8 11.8h8.6" fill="none" stroke="#303030" stroke-width="1.3"/><rect x="1.3" y="19.4" width="21.3" height="2.8" rx="1.4" fill="#d0021b"/></svg>
<svg class="a" style="left:960.3px;top:507.4px;" width="7" height="4" viewBox="0 0 7 4"><path d="M0 0h7L3.5 4z" fill="#9a9a9a"/></svg>
<svg class="a" style="left:982px;top:498.5px;" width="26" height="23" viewBox="0 0 26 23"><title>clear</title><path d="M14.5 1.5L24.5 9.8 13 21.5H8L1.5 15.5z" fill="none" stroke="#303030" stroke-width="1.3"/><path d="M4.5 12l8.5 8M11 21.5h13" fill="none" stroke="#303030" stroke-width="1.3"/></svg>
<svg class="a" style="left:1012.7px;top:507.4px;" width="7" height="4" viewBox="0 0 7 4"><path d="M0 0h7L3.5 4z" fill="#9a9a9a"/></svg>
<svg class="a" style="left:1018.5px;top:534.5px;" width="7" height="7" viewBox="0 0 7 7"><path d="M6 0.5V6H0.5" fill="none" stroke="#999" stroke-width="1.3"/></svg>
<div class="a" style="left:1034px;top:455px;width:0px;height:88px;border-left:1px solid #e8e8e8"></div>
<svg class="a" style="left:1046px;top:455px;" width="23" height="26" viewBox="0 0 23 26"><path d="M0 6.3H22.2" stroke="#444" stroke-width="1.25" fill="none"/><path d="M5.5 11.5H16.5" stroke="#444" stroke-width="1.25" fill="none"/><path d="M5.5 16.3H16.5" stroke="#444" stroke-width="1.25" fill="none"/></svg>
<div class="a" style="left:1076px;top:452.8px;width:36px;height:36.2px;background:#c3c3c3;border-radius:6px"></div>
<svg class="a" style="left:1082.6px;top:455px;" width="23" height="26" viewBox="0 0 23 26"><path d="M0 10.3H22.2" stroke="#444" stroke-width="1.25" fill="none"/><path d="M6 15.5H16.5" stroke="#444" stroke-width="1.25" fill="none"/><path d="M0 20.6H22.2" stroke="#444" stroke-width="1.25" fill="none"/></svg>
<svg class="a" style="left:1120.3px;top:455px;" width="23" height="27" viewBox="0 0 23 27"><path d="M5.7 15.2H15.7" stroke="#444" stroke-width="1.25" fill="none"/><path d="M5.7 20H15.7" stroke="#444" stroke-width="1.25" fill="none"/><path d="M0 25.3H22.2" stroke="#444" stroke-width="1.25" fill="none"/></svg>
<svg class="a" style="left:1159.8px;top:455px;" width="23" height="26" viewBox="0 0 23 26"><path d="M0 6.3H22.2" stroke="#444" stroke-width="1.25" fill="none"/><path d="M11.5 12.8H22.2" stroke="#444" stroke-width="1.25" fill="none"/><path d="M11.5 18.5H22.2" stroke="#444" stroke-width="1.25" fill="none"/><path d="M0 24.5H22.2" stroke="#444" stroke-width="1.25" fill="none"/><path d="M0.5 15.5h8M4 12l-3.5 3.5L4 19" fill="none" stroke="#62b45a" stroke-width="1.15"/></svg>
<svg class="a" style="left:1197.2px;top:455px;" width="23" height="26" viewBox="0 0 23 26"><path d="M0 6.3H22.2" stroke="#444" stroke-width="1.25" fill="none"/><path d="M11.5 12.8H22.2" stroke="#444" stroke-width="1.25" fill="none"/><path d="M11.5 18.5H22.2" stroke="#444" stroke-width="1.25" fill="none"/><path d="M0 24.5H22.2" stroke="#444" stroke-width="1.25" fill="none"/><path d="M0 15.5h8M4.5 12l3.5 3.5L4.5 19" fill="none" stroke="#62b45a" stroke-width="1.15"/></svg>
<svg class="a" style="left:1046px;top:495px;" width="23" height="26" viewBox="0 0 23 26"><path d="M0 5.6H10" stroke="#444" stroke-width="1.25" fill="none"/><path d="M0 11.8H22.2" stroke="#444" stroke-width="1.25" fill="none"/><path d="M0 17.5H10" stroke="#444" stroke-width="1.25" fill="none"/><path d="M0 23.5H22.2" stroke="#444" stroke-width="1.25" fill="none"/></svg>
<svg class="a" style="left:1082.9px;top:495px;" width="23" height="26" viewBox="0 0 23 26"><path d="M6.5 5.6H16" stroke="#444" stroke-width="1.25" fill="none"/><path d="M0 11.8H22.2" stroke="#444" stroke-width="1.25" fill="none"/><path d="M6.5 17.5H16" stroke="#444" stroke-width="1.25" fill="none"/><path d="M0 23.5H22.2" stroke="#444" stroke-width="1.25" fill="none"/></svg>
<svg class="a" style="left:1120.3px;top:495px;" width="23" height="26" viewBox="0 0 23 26"><path d="M12 5.6H22.2" stroke="#444" stroke-width="1.25" fill="none"/><path d="M0 11.8H22.2" stroke="#444" stroke-width="1.25" fill="none"/><path d="M12 17.5H22.2" stroke="#444" stroke-width="1.25" fill="none"/><path d="M0 23.5H22.2" stroke="#444" stroke-width="1.25" fill="none"/></svg>
<svg class="a" style="left:1156.9px;top:495px;" width="23" height="26" viewBox="0 0 23 26"><path d="M0 5.6H22.2" stroke="#444" stroke-width="1.25" fill="none"/><path d="M0 11.8H22.2" stroke="#444" stroke-width="1.25" fill="none"/><path d="M0 17.5H22.2" stroke="#444" stroke-width="1.25" fill="none"/><path d="M0 23.5H22.2" stroke="#444" stroke-width="1.25" fill="none"/></svg>
<svg class="a" style="left:1194px;top:495px;" width="23" height="26" viewBox="0 0 23 26"><path d="M0 17.5H22.2" stroke="#444" stroke-width="1.25" fill="none"/><path d="M0 23.5H22.2" stroke="#444" stroke-width="1.25" fill="none"/><path d="M0.7 4.5v9.7M21.5 4.5v9.7" fill="none" stroke="#444" stroke-width="1.3"/><path d="M3 9.3h6.5M6 6.3l-3 3 3 3M19.2 9.3h-6.5M16.2 6.3l3 3-3 3" fill="none" stroke="#55b44c" stroke-width="1.3"/></svg>
<svg class="a" style="left:1270px;top:459px;" width="37" height="32" viewBox="0 0 37 32"><title>merge</title><rect x="1.5" y="1.8" width="33.8" height="28.8" rx="2.5" fill="none" stroke="#55b44c" stroke-width="1.7"/><path d="M1.5 10.3h33.8M12.4 2v8M24 2v8" stroke="#55b44c" stroke-width="1.5" fill="none"/><path d="M2.5 1.7h31.8" stroke="#333" stroke-width="1.9" fill="none"/><path d="M11.4 16.6h13.4M18 16.6v9.8" stroke="#55b44c" stroke-width="1.6" fill="none"/></svg>
<svg class="cj" role="img" aria-label="合并居中" style="left:1246.6px;top:503px;" width="70.8" height="17.7" viewBox="0 -880 4000 1000"><title>合并居中</title><text x="0" y="0" fill="#4a4a4a">合并居中</text></svg>
<svg class="a" style="left:1323.5px;top:506.8px;" width="6.5" height="3.8" viewBox="0 0 6.5 3.8"><path d="M0 0h6.5L3.25 3.8z" fill="#9a9a9a"/></svg>
<svg class="a" style="left:1365px;top:457.5px;" width="40" height="34" viewBox="0 0 40 34"><title>wrap</title><path d="M8 2H4.5A2.5 2.5 0 0 0 2 4.5V8M2 24v3.5A2.5 2.5 0 0 0 4.5 30H8M30 2h3.5A2.5 2.5 0 0 1 36 4.5V8" fill="none" stroke="#333" stroke-width="1.8"/><path d="M8 9h21M8 15h21M8 21h21" stroke="#9a9a9a" stroke-width="1.5" fill="none"/><path d="M36.5 19.5V31H25.5V28H33.5V19.5zM25.8 25.5v6.5l-6-3.25z" fill="#55b44c"/></svg>
<svg class="cj" role="img" aria-label="自动换行" style="left:1347.5px;top:503px;" width="70.8" height="17.7" viewBox="0 -880 4000 1000"><title>自动换行</title><text x="0" y="0" fill="#4a4a4a">自动换行</text></svg>
<div class="a" style="left:421px;top:547.3px;width:993px;height:346px;background:#ebebeb;border-top:1px solid #e3e3e3"></div>
<div class="a" style="left:433.5px;top:567px;width:222.5px;height:34.5px;background:#fff;border:1px solid #d4d4d4;border-radius:6px;box-sizing:border-box"></div>
<div class="t" style="top:574.46px;font-size:21.3px;color:#3d3d3d;left:236.6px;width:600px;text-align:center;font-family:'Liberation Serif',serif;transform:scaleX(.9);">E5</div>
<svg class="a" style="left:645px;top:582.5px;" width="7" height="4" viewBox="0 0 7 4"><path d="M0 0h7L3.5 4z" fill="#8a8a8a"/></svg>
<svg class="a" style="left:724px;top:571px;" width="26" height="26" viewBox="0 0 26 26"><title>zoom</title><circle cx="10.6" cy="10.7" r="9.3" fill="none" stroke="#444" stroke-width="1.5"/><path d="M16.8 17.8l5.6 5.3a1.3 1.3 0 0 0 1.8-1.9l-5.6-5.3" fill="none" stroke="#444" stroke-width="1.4"/><path d="M6.5 15.6V6.7h5.3a2.9 2.9 0 0 1 0 5.8H6.5M11.3 12.5l3.2 3.3" fill="none" stroke="#444" stroke-width="1.5"/></svg>
<svg class="a" style="left:762px;top:572px;" width="28" height="24" viewBox="0 0 28 24"><title>fx</title><g fill="none" stroke="#444" stroke-width="1.6" stroke-linecap="round"><path d="M16.3 2.9C14 1.7 12.3 2.6 11.6 5.3L8.3 17.3C7.5 20.1 5.5 21 2.4 20.2"/><path d="M5.3 8.6h7.6"/><path d="M11.3 18.6C14.5 18.7 21.5 9.5 25.6 8.7"/><path d="M16.6 9.3C19.3 8.3 20.5 18 24.8 17.6"/></g></svg>
<div class="a" style="left:800.5px;top:567px;width:700px;height:34.5px;background:#fff;border:1px solid #d4d4d4;border-radius:6px;box-sizing:border-box"></div>
<div class="a" style="left:470.5px;top:646.5px;width:944px;height:246px;background:#fff"></div>
<div class="a" style="left:908.3px;top:614.3px;width:144.3px;height:32.7px;background:#d5d5d5;border-bottom:2px solid #3f8f52;box-sizing:border-box"></div>
<div class="a" style="left:421px;top:758.6px;width:49.5px;height:28px;background:#d5d5d5;border-right:2px solid #3f8f52;box-sizing:border-box"></div>
<svg class="a" style="left:447.5px;top:624px;" width="16" height="15.5" viewBox="0 0 16 15.5"><path d="M15.5 0v15H0z" fill="#b4b4b4"/></svg>
<svg class="a" style="left:0;top:0" width="1414" height="892" viewBox="0 0 1414 892" fill="none" stroke-width="1" shape-rendering="crispEdges"><path d="M470.5 616V646" stroke="#d6d6d6"/><path d="M470.5 646.5V892" stroke="#d4d4d4"/><path d="M569.5 616V646" stroke="#d6d6d6"/><path d="M569.5 646.5V892" stroke="#d4d4d4"/><path d="M668.4 616V646" stroke="#d6d6d6"/><path d="M668.4 646.5V892" stroke="#d4d4d4"/><path d="M809.6 616V646" stroke="#d6d6d6"/><path d="M809.6 646.5V892" stroke="#d4d4d4"/><path d="M908.3 616V646" stroke="#d6d6d6"/><path d="M908.3 646.5V892" stroke="#d4d4d4"/><path d="M1052.6 616V646" stroke="#d6d6d6"/><path d="M1052.6 646.5V892" stroke="#d4d4d4"/><path d="M1151.5 616V646" stroke="#d6d6d6"/><path d="M1151.5 646.5V892" stroke="#d4d4d4"/><path d="M1250.4 616V646" stroke="#d6d6d6"/><path d="M1250.4 646.5V892" stroke="#d4d4d4"/><path d="M1349.3 616V646" stroke="#d6d6d6"/><path d="M1349.3 646.5V892" stroke="#d4d4d4"/><path d="M421 646.5H1414" stroke="#b9b9b9"/><path d="M432 674.52H470" stroke="#d0d0d0"/><path d="M470.5 674.52H1414" stroke="#d4d4d4"/><path d="M432 702.54H470" stroke="#d0d0d0"/><path d="M470.5 702.54H1414" stroke="#d4d4d4"/><path d="M432 730.56H470" stroke="#d0d0d0"/><path d="M470.5 730.56H1414" stroke="#d4d4d4"/><path d="M432 758.58H470" stroke="#d0d0d0"/><path d="M470.5 758.58H1414" stroke="#d4d4d4"/><path d="M432 786.6H470" stroke="#d0d0d0"/><path d="M470.5 786.6H1414" stroke="#d4d4d4"/><path d="M432 814.62H470" stroke="#d0d0d0"/><path d="M470.5 814.62H1414" stroke="#d4d4d4"/><path d="M432 842.64H470" stroke="#d0d0d0"/><path d="M470.5 842.64H1414" stroke="#d4d4d4"/><path d="M432 870.66H470" stroke="#d0d0d0"/><path d="M470.5 870.66H1414" stroke="#d4d4d4"/><path d="M432 898.68H470" stroke="#d0d0d0"/><path d="M470.5 898.68H1414" stroke="#d4d4d4"/></svg>
<div class="t" style="top:620.87px;font-size:20px;color:#707070;left:220.5px;width:600px;text-align:center;">A</div>
<div class="t" style="top:620.87px;font-size:20px;color:#707070;left:319.45px;width:600px;text-align:center;">B</div>
<div class="t" style="top:620.87px;font-size:20px;color:#707070;left:439.5px;width:600px;text-align:center;">C</div>
<div class="t" style="top:620.87px;font-size:20px;color:#707070;left:559.45px;width:600px;text-align:center;">D</div>
<div class="t" style="top:620.87px;font-size:20px;color:#4f9d60;left:680.95px;width:600px;text-align:center;">E</div>
<div class="t" style="top:620.87px;font-size:20px;color:#707070;left:802.55px;width:600px;text-align:center;">F</div>
<div class="t" style="top:620.87px;font-size:20px;color:#707070;left:901.45px;width:600px;text-align:center;">G</div>
<div class="t" style="top:620.87px;font-size:20px;color:#707070;left:1000.35px;width:600px;text-align:center;">H</div>
<div class="t" style="top:620.87px;font-size:20px;color:#707070;left:1099.15px;width:600px;text-align:center;">I</div>
<div class="t" style="top:652.29px;font-size:20px;color:#707070;left:146.2px;width:600px;text-align:center;">1</div>
<div class="t" style="top:680.31px;font-size:20px;color:#707070;left:146.2px;width:600px;text-align:center;">2</div>
<div class="t" style="top:708.33px;font-size:20px;color:#707070;left:146.2px;width:600px;text-align:center;">3</div>
<div class="t" style="top:736.35px;font-size:20px;color:#707070;left:146.2px;width:600px;text-align:center;">4</div>
<div class="t" style="top:764.37px;font-size:20px;color:#4f9d60;left:146.2px;width:600px;text-align:center;">5</div>
<div class="t" style="top:792.39px;font-size:20px;color:#707070;left:146.2px;width:600px;text-align:center;">6</div>
<div class="t" style="top:820.41px;font-size:20px;color:#707070;left:146.2px;width:600px;text-align:center;">7</div>
<div class="t" style="top:848.43px;font-size:20px;color:#707070;left:146.2px;width:600px;text-align:center;">8</div>
<div class="t" style="top:876.45px;font-size:20px;color:#707070;left:146.2px;width:600px;text-align:center;">9</div>
<div class="t hd" style="left:474.3px;top:651.66px;transform:scaleX(0.74)">R</div>
<div class="t hd" style="left:573.5px;top:651.66px;transform:scaleX(0.89)">dN/N</div>
<div class="t hd" style="left:672.8px;top:651.66px;transform:scaleX(0.805)">t_FWHM_N</div>
<div class="t hd" style="left:813.7px;top:651.66px;transform:scaleX(0.835)">t_FWHM_v</div>
<div class="t nm" style="right:848.4px;top:680.18px">1695</div>
<div class="t nm" style="right:749.5px;top:680.18px">0<span class="dot">.</span>0666</div>
<div class="t nm" style="right:609.2px;top:680.18px">0<span class="dot">.</span>445251521</div>
<div class="t nm" style="right:510px;top:680.18px">2<span class="dot">.</span>21</div>
<div class="t nm" style="right:848.4px;top:708.2px">1710</div>
<div class="t nm" style="right:749.5px;top:708.2px">0<span class="dot">.</span>0714</div>
<div class="t nm" style="right:609.2px;top:708.2px">0<span class="dot">.</span>485827629</div>
<div class="t nm" style="right:510px;top:708.2px">2<span class="dot">.</span>55</div>
<div class="t nm" style="right:848.4px;top:736.22px">1725</div>
<div class="t nm" style="right:749.5px;top:736.22px">0<span class="dot">.</span>0762</div>
<div class="t nm" style="right:609.2px;top:736.22px">0<span class="dot">.</span>527624493</div>
<div class="t nm" style="right:510px;top:736.22px">2<span class="dot">.</span>62</div>
<div class="t nm" style="right:848.4px;top:764.24px">1740</div>
<div class="t nm" style="right:749.5px;top:764.24px">0<span class="dot">.</span>1096</div>
<div class="t nm" style="right:609.2px;top:764.24px">0<span class="dot">.</span>772148493</div>
<div class="t nm" style="right:510px;top:764.24px">3<span class="dot">.</span>68</div>
<div class="t nm" style="right:848.4px;top:792.26px">1755</div>
<div class="t nm" style="right:749.5px;top:792.26px">0<span class="dot">.</span>1946</div>
<div class="t nm" style="right:609.2px;top:792.26px">1<span class="dot">.</span>394725865</div>
<div class="t nm" style="right:510px;top:792.26px">3<span class="dot">.</span>2</div>
<div class="t nm" style="right:848.4px;top:820.28px">1770</div>
<div class="t nm" style="right:749.5px;top:820.28px">0<span class="dot">.</span>1772</div>
<div class="t nm" style="right:609.2px;top:820.28px">1<span class="dot">.</span>29182007</div>
<div class="t nm" style="right:510px;top:820.28px">3<span class="dot">.</span>81</div>
<div class="a" style="left:907.3px;top:757px;width:147px;height:31px;border:3px solid #4f9d5f;box-sizing:border-box"></div>
<div class="a" style="left:1049.3px;top:783px;width:7px;height:7px;background:#4a9a5b;border:1px solid #fff;box-sizing:border-box"></div>
<div class="a" style="left:488.5px;top:646.8px;width:36px;height:36px;border-radius:50%;background:radial-gradient(circle,rgba(228,228,20,.96) 0,rgba(230,230,30,.93) 62%,rgba(236,236,60,.55) 82%,rgba(240,240,90,0) 100%)"></div>
<svg class="a" style="left:495px;top:653px;" width="26" height="24" viewBox="0 0 26 24"><title>cell cursor</title><path d="M7.5 2.2h9.5v6h6.8v9.3h-6.8v5.5h-9.5v-5.5H2v-9.3h5.5z" fill="#77770a"/><path d="M9 3.3h5.3v6.3h6v4h-6v5.2H9v-5.2H3v-4h6z" fill="#f1f168"/></svg>
</div></div>
</body></html>
